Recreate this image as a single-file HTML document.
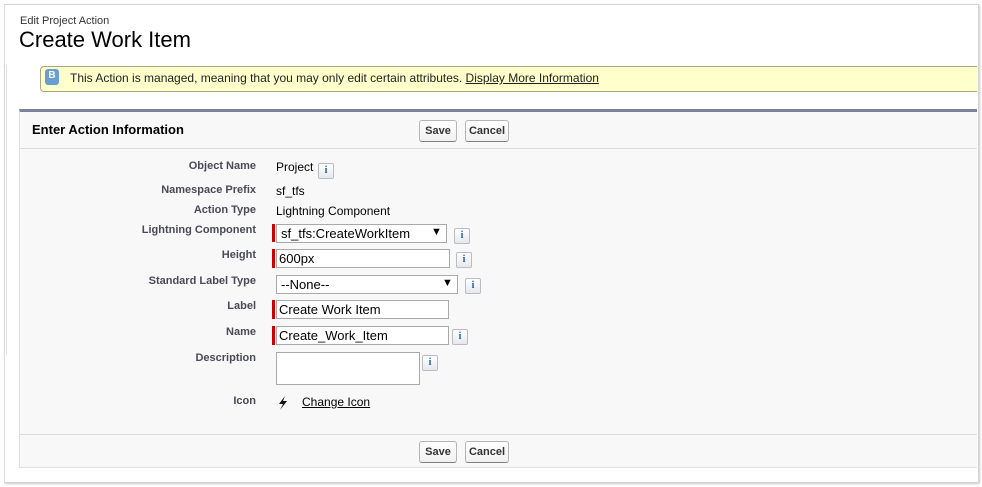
<!DOCTYPE html>
<html><head><style>
body{margin:0;width:982px;height:487px;background:#fff;font-family:"Liberation Sans",Arial,sans-serif;position:relative;overflow:hidden}
.a{position:absolute}
.frame{left:4px;top:4px;width:973px;height:477px;border:1px solid #d4d4d4;border-left-color:#ddd;box-shadow:1px 1px 2px #ccc;background:#fff}
.lbl{position:absolute;right:726px;font-size:11px;font-weight:bold;color:#4a4a56;text-align:right;white-space:nowrap}
.val{position:absolute;left:276px;font-size:12px;color:#000;white-space:nowrap}
.inp{position:absolute;left:276px;height:17px;border:1px solid #a9a9a9;background:#fff;font-size:13px;line-height:17px;padding-left:2px;box-sizing:content-box;color:#000}
.req{position:absolute;left:272px;width:3px;background:#c00}
.info{position:absolute;width:14px;height:14px;border:1px solid #b9bcc4;border-radius:2px;background:linear-gradient(#fff,#e6e8ec);font:bold 10px "Liberation Serif",serif;color:#1a5fb4;text-align:center;line-height:14px}
.btn{position:absolute;height:20px;border:1px solid #b5b5b5;border-bottom-color:#7f7f7f;border-radius:3px;background:linear-gradient(#fff,#f0f0f0);font-size:11px;font-weight:bold;color:#333;line-height:20px;text-align:center}
.arr{position:absolute;font-size:11px;color:#000}
</style></head><body>
<div class="a frame"></div>
<div class="a" style="left:6px;top:65px;width:1px;height:290px;background:#e4e4e4"></div>
<div class="a" style="left:20px;top:15px;font-size:11px;color:#333">Edit Project Action</div>
<div class="a" style="left:19px;top:27px;font-size:22px;color:#000">Create Work Item</div>
<div class="a" style="left:40px;top:66px;width:936px;height:24px;background:#ffc;border:1px solid #a8a880;border-right:none;border-radius:4px 0 0 4px"></div>
<div class="a" style="left:45px;top:69px;width:14px;height:16px;background:#6b9ed0;border-radius:3px;color:#fff;font-size:10px;font-weight:bold;text-align:center;line-height:13px">B</div>
<div class="a" style="left:70px;top:71px;font-size:12px;color:#222">This Action is managed, meaning that you may only edit certain attributes. <span style="text-decoration:underline">Display More Information</span></div>

<div class="a" style="left:19px;top:109px;width:958px;height:359px;background:#f8f8f8;border-top:3px solid #7a8399;border-left:1px solid #e0e0e0;border-bottom:1px solid #e0e0e0;box-sizing:border-box"></div>
<div class="a" style="left:20px;top:148px;width:957px;height:1px;background:#dcdcdc"></div>
<div class="a" style="left:20px;top:434px;width:957px;height:1px;background:#dcdcdc"></div>
<div class="a" style="left:32px;top:122px;font-size:13px;font-weight:bold;color:#000">Enter Action Information</div>
<div class="btn" style="left:419px;top:120px;width:36px">Save</div>
<div class="btn" style="left:465px;top:120px;width:42px">Cancel</div>
<div class="btn" style="left:419px;top:441px;width:36px">Save</div>
<div class="btn" style="left:465px;top:441px;width:42px">Cancel</div>

<div class="lbl" style="top:160px">Object Name</div><div class="val" style="top:160px">Project</div><div class="info" style="left:318px;top:163px">i</div>
<div class="lbl" style="top:184px">Namespace Prefix</div><div class="val" style="top:184px">sf_tfs</div>
<div class="lbl" style="top:204px">Action Type</div><div class="val" style="top:204px">Lightning Component</div>
<div class="lbl" style="top:224px">Lightning Component</div><div class="req" style="top:224px;height:18px"></div>
<div class="inp" style="top:224px;width:165px;padding-left:4px">sf_tfs:CreateWorkItem</div><div class="arr" style="left:431px;top:226px">▼</div><div class="info" style="left:454px;top:228px">i</div>
<div class="lbl" style="top:249px">Height</div><div class="req" style="top:249px;height:19px"></div>
<div class="inp" style="top:249px;width:170px">600px</div><div class="info" style="left:456px;top:252px">i</div>
<div class="lbl" style="top:275px">Standard Label Type</div>
<div class="inp" style="top:275px;width:176px;padding-left:4px">--None--</div><div class="arr" style="left:442px;top:277px">▼</div><div class="info" style="left:465px;top:278px">i</div>
<div class="lbl" style="top:300px">Label</div><div class="req" style="top:300px;height:19px"></div>
<div class="inp" style="top:300px;width:169px">Create Work Item</div>
<div class="lbl" style="top:326px">Name</div><div class="req" style="top:326px;height:19px"></div>
<div class="inp" style="top:326px;width:169px">Create_Work_Item</div><div class="info" style="left:452px;top:329px">i</div>
<div class="lbl" style="top:352px">Description</div>
<div class="inp" style="top:352px;width:140px;height:31px"></div><div class="info" style="left:422px;top:355px">i</div>
<div class="lbl" style="top:395px">Icon</div>
<svg class="a" style="left:277px;top:396px" width="12" height="14" viewBox="0 0 12 14"><path d="M8 0 L2 8 L6 8 L3 14 L10 5 L6 5 Z" fill="#111"/></svg>
<div class="val" style="left:302px;top:395px;text-decoration:underline">Change Icon</div>
</body></html>
